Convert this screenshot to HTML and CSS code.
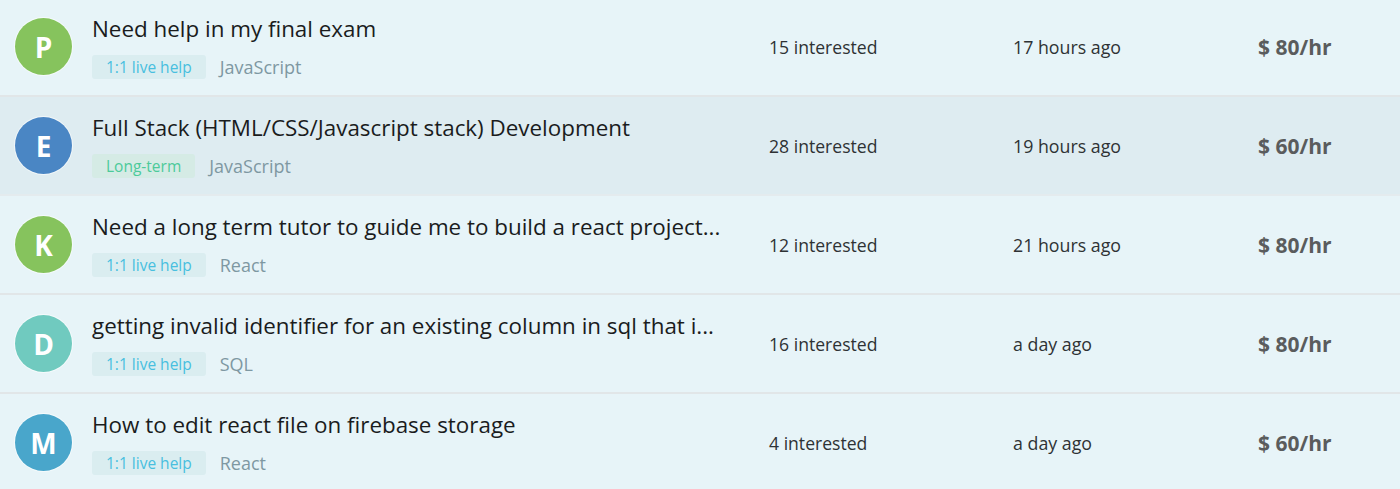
FILE: index.html
```html
<!DOCTYPE html>
<html>
<head>
<meta charset="utf-8">
<link rel="stylesheet" href="styles.css">
</head>
<body>
<div class="list">
  <div class="row">
    <div class="avatar green">P</div>
    <div class="main">
      <div class="title">Need help in my final exam</div>
      <div class="tags"><span class="chip live">1:1 live help</span><span class="topic">JavaScript</span></div>
    </div>
    <div class="interest">15 interested</div>
    <div class="time">17 hours ago</div>
    <div class="price">$ 80/hr</div>
  </div>
  <div class="row active">
    <div class="avatar blue">E</div>
    <div class="main">
      <div class="title">Full Stack (HTML/CSS/Javascript stack) Development</div>
      <div class="tags"><span class="chip long">Long-term</span><span class="topic">JavaScript</span></div>
    </div>
    <div class="interest">28 interested</div>
    <div class="time">19 hours ago</div>
    <div class="price">$ 60/hr</div>
  </div>
  <div class="row">
    <div class="avatar green">K</div>
    <div class="main">
      <div class="title">Need a long term tutor to guide me to build a react project...</div>
      <div class="tags"><span class="chip live">1:1 live help</span><span class="topic">React</span></div>
    </div>
    <div class="interest">12 interested</div>
    <div class="time">21 hours ago</div>
    <div class="price">$ 80/hr</div>
  </div>
  <div class="row">
    <div class="avatar teal">D</div>
    <div class="main">
      <div class="title">getting invalid identifier for an existing column in sql that i...</div>
      <div class="tags"><span class="chip live">1:1 live help</span><span class="topic">SQL</span></div>
    </div>
    <div class="interest">16 interested</div>
    <div class="time">a day ago</div>
    <div class="price">$ 80/hr</div>
  </div>
  <div class="row">
    <div class="avatar sky">M</div>
    <div class="main">
      <div class="title">How to edit react file on firebase storage</div>
      <div class="tags"><span class="chip live">1:1 live help</span><span class="topic">React</span></div>
    </div>
    <div class="interest">4 interested</div>
    <div class="time">a day ago</div>
    <div class="price">$ 60/hr</div>
  </div>
</div>
</body>
</html>
```
FILE: styles.css
```css
html, body {
  margin: 0;
  padding: 0;
  background: #e7f4f8;
  font-family: "Open Sans", "Noto Sans", sans-serif;
  overflow: hidden;
}
.list {
  margin-top: -2px;
}
.row {
  display: flex;
  align-items: center;
  height: 97px;
  padding-left: 15px;
  background: #e7f4f8;
  border-bottom: 2px solid #e1e6e8;
}
.row.active {
  background: #deecf1;
  border-bottom-color: #e4ebee;
}
.avatar {
  width: 57px;
  height: 57px;
  border-radius: 50%;
  flex: none;
  margin-right: 20px;
  display: flex;
  align-items: center;
  justify-content: center;
  color: #fff;
  font-weight: 700;
  font-size: 28px;
  box-shadow: 0 0 0 1px rgba(255,255,255,0.6);
}
.avatar.green { background: #86c35d; }
.avatar.blue { background: #4a86c4; }
.avatar.teal { background: #70cabf; }
.avatar.sky { background: #49a6cb; }
.main {
  width: 640px;
  margin-right: 37px;
  display: flex;
  flex-direction: column;
  min-width: 0;
}
.title {
  font-size: 22.4px;
  line-height: 30px;
  color: #1a1c1d;
  white-space: nowrap;
}
.tags {
  margin-top: 11px;
  display: flex;
  align-items: center;
}
.chip {
  height: 24px;
  line-height: 24px;
  padding: 0 14px;
  font-size: 15.5px;
  border-radius: 3px;
  margin-right: 14px;
}
.chip.live {
  background: #daedf0;
  color: #48bfdf;
}
.chip.long {
  background: #d5ebe5;
  color: #4cca9a;
}
.topic {
  font-size: 18px;
  color: #7e98a2;
}
.interest {
  width: 244px;
  font-size: 17.6px;
  color: #2e3234;
}
.time {
  width: 245px;
  font-size: 17.8px;
  color: #2e3234;
}
.price {
  font-size: 21px;
  font-weight: 700;
  color: #5a5c5d;
}
```
